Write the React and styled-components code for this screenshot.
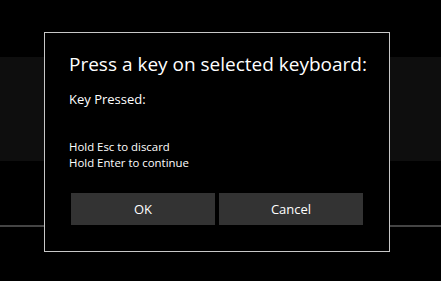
import React from 'react';
import styled, { createGlobalStyle } from 'styled-components';

const Global = createGlobalStyle`
  html, body {
    margin: 0;
    padding: 0;
    background: #000;
  }
  body {
    font-family: 'Open Sans', 'Noto Sans', sans-serif;
    color: #fff;
  }
`;

export default function App() {
  return (
    <>
      <Global />
      <Page>
        <Band />
        <Divider />
        <Dialog>
          <Title>Press a key on selected keyboard:</Title>
          <Label>Key Pressed:</Label>
          <Hint>
            Hold Esc to discard
            <br />
            Hold Enter to continue
          </Hint>
          <Buttons>
            <Button>OK</Button>
            <Button>Cancel</Button>
          </Buttons>
        </Dialog>
      </Page>
    </>
  );
}

const Page = styled.div`
  position: relative;
  width: 441px;
  height: 281px;
  padding-top: 57px;
  box-sizing: border-box;
  background: #000;
  overflow: hidden;
`;

const Band = styled.div`
  height: 104px;
  background: #0e0e0e;
`;

const Divider = styled.div`
  margin-top: 64px;
  height: 2px;
  background: #444;
`;

const Dialog = styled.div`
  position: absolute;
  left: 44px;
  top: 32px;
  width: 346px;
  height: 220px;
  box-sizing: border-box;
  border: 1px solid #c8c8c8;
  background: #000;
  padding: 18px 26px 0 24px;
  display: flex;
  flex-direction: column;
`;

const Title = styled.div`
  font-size: 19px;
  line-height: 26px;
  color: #fff;
  white-space: nowrap;
`;

const Label = styled.div`
  margin-top: 13px;
  font-size: 13px;
  line-height: 18px;
`;

const Hint = styled.div`
  margin-top: 31px;
  font-size: 11.4px;
  line-height: 16px;
`;

const Buttons = styled.div`
  margin-top: 22px;
  padding-left: 2px;
  display: grid;
  grid-template-columns: 144px 144px;
  gap: 4px;
`;

const Button = styled.button`
  height: 32px;
  border: none;
  background: #333;
  color: #fff;
  font-family: inherit;
  font-size: 13px;
  padding: 0;
`;
